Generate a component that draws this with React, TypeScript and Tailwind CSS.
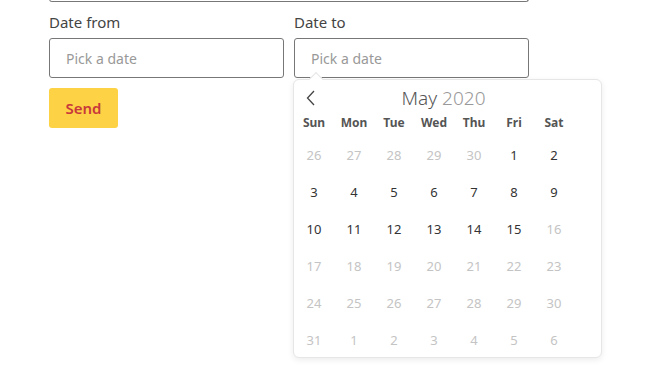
import React from "react";

const days = ["Sun", "Mon", "Tue", "Wed", "Thu", "Fri", "Sat"];
const cells: { d: number; active: boolean }[] = [];
[26, 27, 28, 29, 30].forEach((d) => cells.push({ d, active: false }));
for (let i = 1; i <= 15; i++) cells.push({ d: i, active: true });
for (let i = 16; i <= 31; i++) cells.push({ d: i, active: false });
for (let i = 1; i <= 6; i++) cells.push({ d: i, active: false });

export default function App() {
  return (
    <div
      className="relative w-[648px] h-[382px] bg-white overflow-hidden text-[#333]"
      style={{ fontFamily: '"Noto Sans", "Open Sans", sans-serif' }}
    >
      <div className="ml-[49px] w-[480px]">
        <div className="h-[3px] -mt-[1px] border-b border-x border-[#777] rounded-b-[3px]" />
        <div className="flex gap-[10px] mt-[9px]">
          <div className="w-[235px]">
            <div className="text-[15px] leading-[22px] text-[#444]">Date from</div>
            <div className="mt-[5px] h-[40px] border border-[#777] rounded-[3px] flex items-center pl-[16px] text-[14px] text-[#999]">
              Pick a date
            </div>
          </div>
          <div className="w-[235px] relative">
            <div className="text-[15px] leading-[22px] text-[#444]">Date to</div>
            <div className="mt-[5px] h-[40px] border border-[#777] rounded-[3px] flex items-center pl-[16px] text-[14px] text-[#999]">
              Pick a date
            </div>
            <div className="absolute left-[-1px] top-[68px] w-[309px] h-[279px] bg-white border border-[#e6e6e6] rounded-[6px] shadow-[0_2px_6px_rgba(0,0,0,0.08)] z-10">
              <div className="absolute left-[17px] top-[-6px] w-[10px] h-[10px] bg-white border-l border-t border-[#e6e6e6] rotate-45" />
              <div className="relative h-[36px] flex items-center justify-center pr-[8px]">
                <svg
                  className="absolute left-[12px] top-[10px]"
                  width="10"
                  height="16"
                  viewBox="0 0 10 16"
                  fill="none"
                  stroke="#444"
                  strokeWidth="1.3"
                >
                  <path d="M8 1 L1.5 8 L8 15" />
                </svg>
                <div className="text-[19px] font-light">
                  <span className="text-[#555]">May</span>{" "}
                  <span className="text-[#999]">2020</span>
                </div>
              </div>
              <div className="grid grid-cols-[repeat(7,40px)] w-[280px]">
                {days.map((d) => (
                  <div key={d} className="h-[14px] flex items-center justify-center text-[12px] font-bold text-[#555]">
                    {d}
                  </div>
                ))}
              </div>
              <div className="grid grid-cols-[repeat(7,40px)] auto-rows-[37px] w-[280px] mt-[7px]">
                {cells.map((c, i) => (
                  <div
                    key={i}
                    className={`flex items-center justify-center text-[13px] ${c.active ? "text-[#333]" : "text-[#c4c4c4]"}`}
                  >
                    {c.d}
                  </div>
                ))}
              </div>
            </div>
          </div>
        </div>
        <button className="mt-[10px] w-[69px] h-[40px] bg-[#fdd244] rounded-[3px] text-[#c8393b] text-[15px] font-semibold">
          Send
        </button>
      </div>
    </div>
  );
}
